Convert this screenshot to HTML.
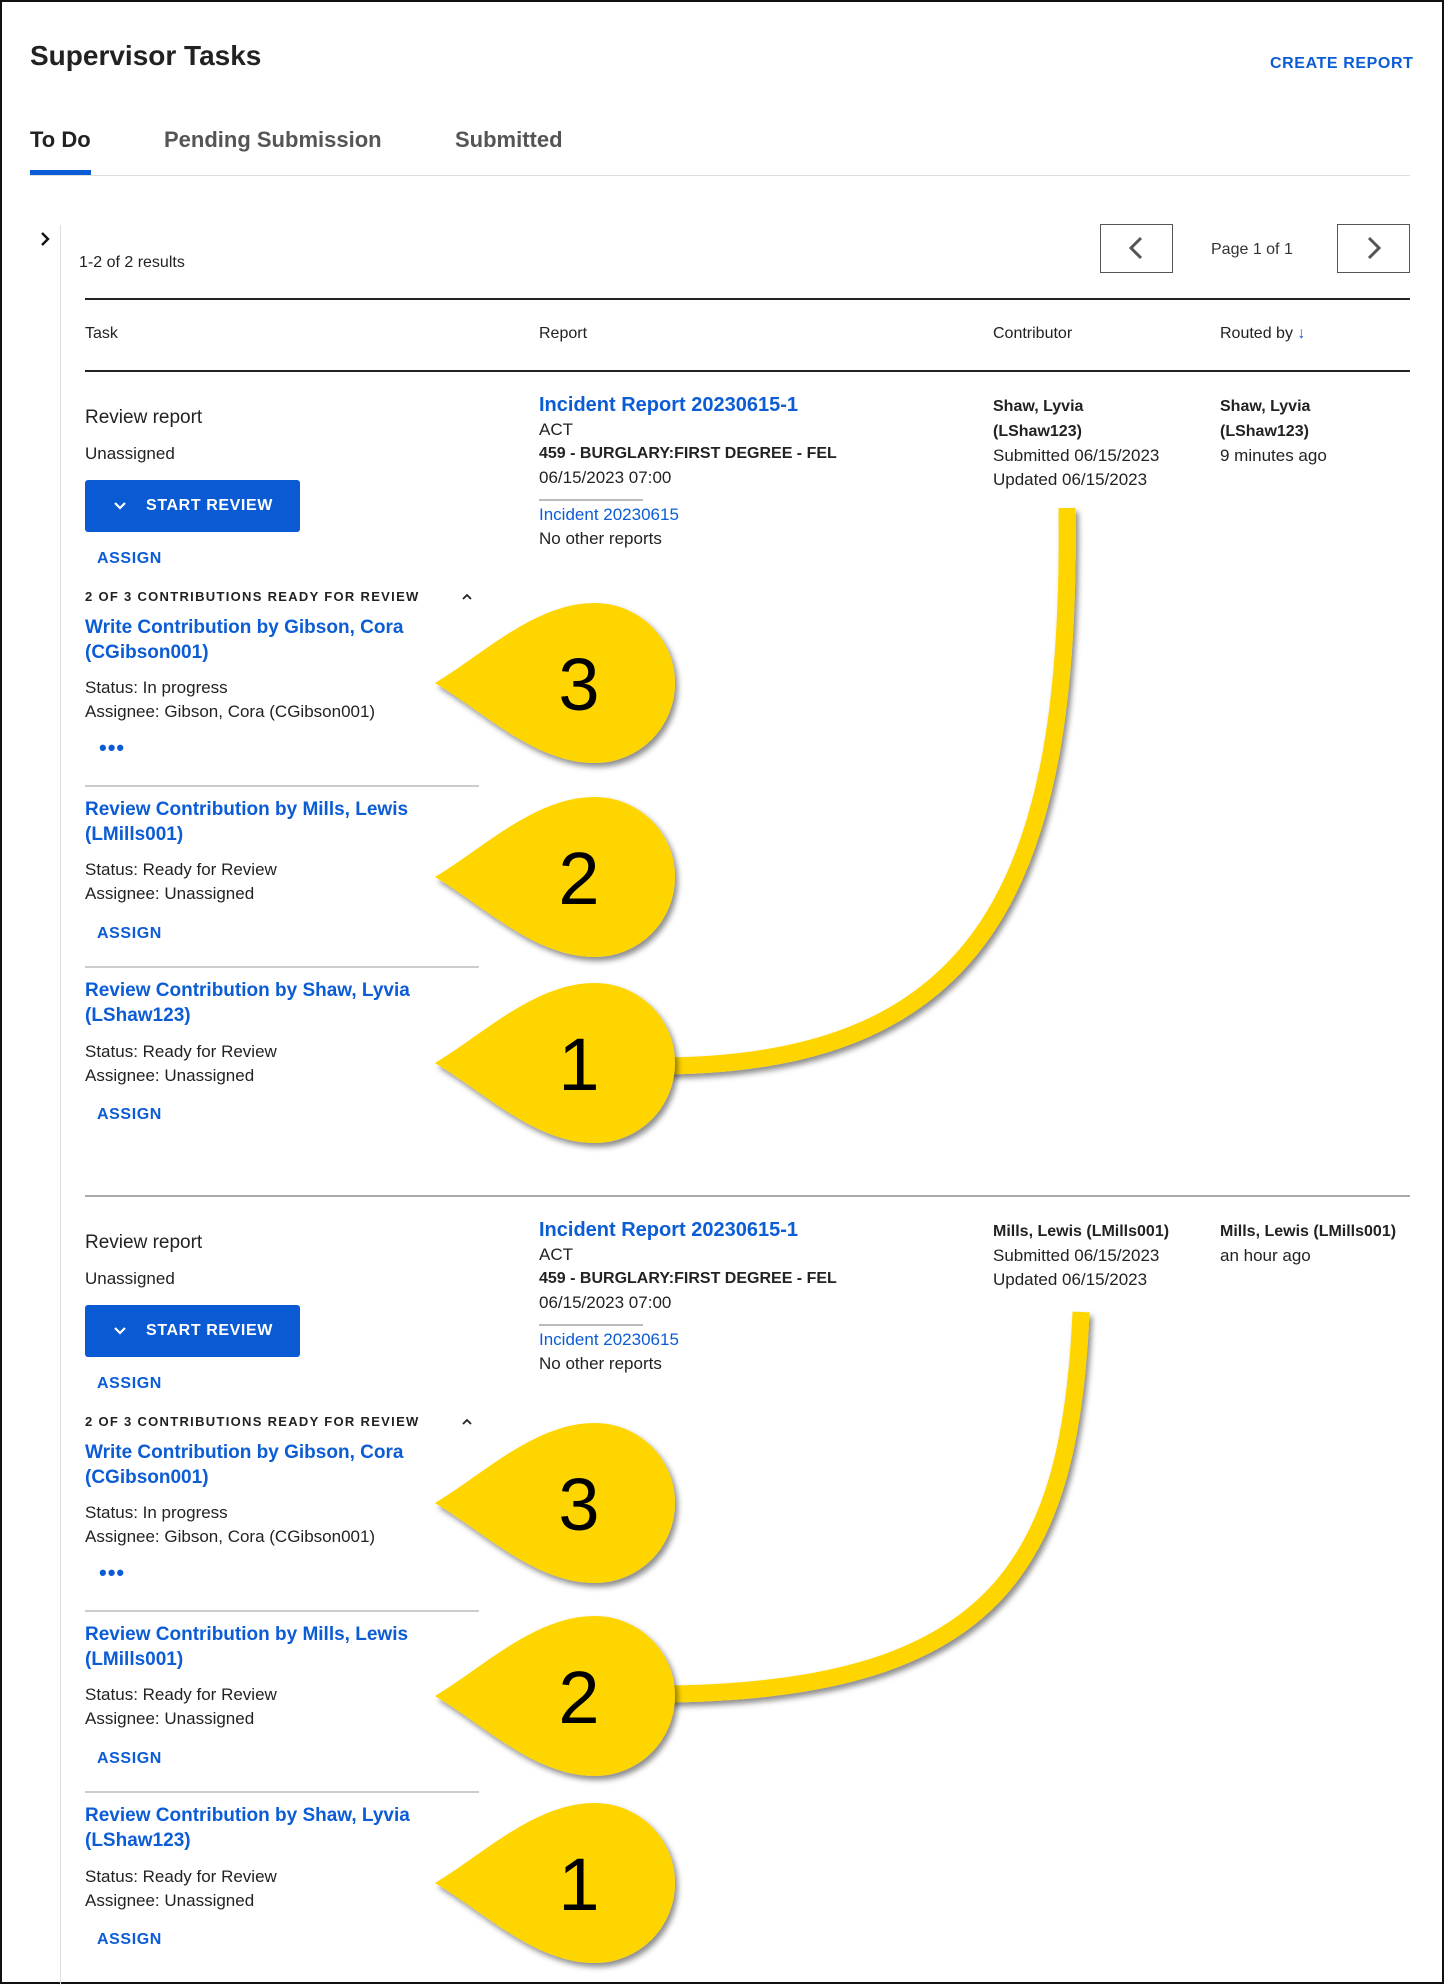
<!DOCTYPE html>
<html><head><meta charset="utf-8"><style>
*{margin:0;padding:0;box-sizing:border-box}
body{width:1444px;height:1984px;position:relative;background:#fff;font-family:"Liberation Sans",Arial,sans-serif;color:#222;overflow:hidden}
.frame{position:absolute;left:0;top:0;width:1444px;height:1984px;border:2px solid #111}
.t{position:absolute;white-space:nowrap;font-size:17px;line-height:24px}
.b{font-weight:bold}
.blue{color:#0b5cd5}
.lnk{color:#0b5cd5;font-size:19px;font-weight:bold;line-height:25px}
.cap{color:#0b5cd5;font-size:16px;font-weight:bold;letter-spacing:.6px}
.hl{position:absolute;background:#ccc;height:2px}
.btn{position:absolute;background:#0a5ad4;border-radius:3px;color:#fff;font-weight:bold;font-size:16px;letter-spacing:.6px;display:flex;align-items:center;justify-content:center;width:215px;height:52px;left:85px}
.pg{position:absolute;width:73px;height:49px;border:1.5px solid #555;top:224px}
.hd{font-size:16px;color:#222}
</style></head><body>
<div class="frame"></div>

<div class="t b" style="left:30px;top:38px;font-size:28px;line-height:36px;color:#222">Supervisor Tasks</div>
<div class="t cap" style="left:1270px;top:52px;font-size:16px">CREATE REPORT</div>

<div class="t b" style="left:30px;top:126px;font-size:22px;line-height:28px;color:#222">To Do</div>
<div class="t b" style="left:164px;top:126px;font-size:22px;line-height:28px;color:#555">Pending Submission</div>
<div class="t b" style="left:455px;top:126px;font-size:22px;line-height:28px;color:#555">Submitted</div>
<div style="position:absolute;left:30px;top:170px;width:61px;height:6px;background:#0b5cd5"></div>
<div style="position:absolute;left:30px;top:175px;width:1380px;height:1px;background:#ddd"></div>

<svg style="position:absolute;left:38px;top:231px" width="14" height="16" viewBox="0 0 14 16"><path d="M4 2l6 6-6 6" fill="none" stroke="#111" stroke-width="2.4"/></svg>
<div style="position:absolute;left:60px;top:225px;width:1px;height:1760px;background:#ddd"></div>

<div class="t" style="left:79px;top:251px;font-size:16px">1-2 of 2 results</div>
<div class="pg" style="left:1100px"><svg width="70" height="46" viewBox="0 0 70 46"><path d="M40 13l-10 10 10 10" fill="none" stroke="#555" stroke-width="3"/></svg></div>
<div class="t" style="left:1211px;top:238px;font-size:16px;color:#333">Page 1 of 1</div>
<div class="pg" style="left:1337px"><svg width="70" height="46" viewBox="0 0 70 46"><path d="M31 13l10 10-10 10" fill="none" stroke="#555" stroke-width="3"/></svg></div>

<div style="position:absolute;left:85px;top:298px;width:1325px;height:2px;background:#222"></div>
<div class="t hd" style="left:85px;top:322px">Task</div>
<div class="t hd" style="left:539px;top:322px">Report</div>
<div class="t hd" style="left:993px;top:322px">Contributor</div>
<div class="t hd" style="left:1220px;top:322px">Routed by <span class="blue">&#8595;</span></div>
<div style="position:absolute;left:85px;top:370px;width:1325px;height:2px;background:#222"></div>

<!-- ROW 1 -->
<div class="t" style="left:85px;top:406px;font-size:19px">Review report</div>
<div class="t" style="left:85px;top:442px">Unassigned</div>
<div class="btn" style="top:480px"><svg width="16" height="12" viewBox="0 0 16 12" style="margin-right:18px"><path d="M3 3l5 5 5-5" fill="none" stroke="#fff" stroke-width="2.2"/></svg>START REVIEW</div>
<div class="t cap" style="left:97px;top:547px">ASSIGN</div>
<div class="t b" style="left:85px;top:587px;font-size:13px;letter-spacing:1.3px;line-height:20px">2 OF 3 CONTRIBUTIONS READY FOR REVIEW</div>
<svg style="position:absolute;left:460px;top:592px" width="14" height="10" viewBox="0 0 14 10"><path d="M3 7l4-4 4 4" fill="none" stroke="#222" stroke-width="1.8"/></svg>
<div class="t lnk" style="left:85px;top:615px">Write Contribution by Gibson, Cora<br>(CGibson001)</div>
<div class="t" style="left:85px;top:676px">Status: In progress<br>Assignee: Gibson, Cora (CGibson001)</div>
<div class="t blue b" style="left:99px;top:736px;font-size:22px;letter-spacing:1px">&#8226;&#8226;&#8226;</div>
<div class="hl" style="left:85px;top:785px;width:394px"></div>
<div class="t lnk" style="left:85px;top:797px">Review Contribution by Mills, Lewis<br>(LMills001)</div>
<div class="t" style="left:85px;top:858px">Status: Ready for Review<br>Assignee: Unassigned</div>
<div class="t cap" style="left:97px;top:922px">ASSIGN</div>
<div class="hl" style="left:85px;top:966px;width:394px"></div>
<div class="t lnk" style="left:85px;top:978px">Review Contribution by Shaw, Lyvia<br>(LShaw123)</div>
<div class="t" style="left:85px;top:1040px">Status: Ready for Review<br>Assignee: Unassigned</div>
<div class="t cap" style="left:97px;top:1103px">ASSIGN</div>

<div class="t lnk" style="left:539px;top:393px;font-size:20px">Incident Report 20230615-1</div>
<div class="t" style="left:539px;top:418px">ACT</div>
<div class="t b" style="left:539px;top:442px;font-size:16px">459 - BURGLARY:FIRST DEGREE - FEL</div>
<div class="t" style="left:539px;top:466px">06/15/2023 07:00</div>
<div style="position:absolute;left:539px;top:499px;width:104px;height:2px;background:#bbb"></div>
<div class="t blue" style="left:539px;top:503px">Incident 20230615</div>
<div class="t" style="left:539px;top:527px">No other reports</div>

<div class="t" style="left:993px;top:394px"><b style="font-size:16px">Shaw, Lyvia<br>(LShaw123)</b><br>Submitted 06/15/2023<br>Updated 06/15/2023</div>
<div class="t" style="left:1220px;top:394px"><b style="font-size:16px">Shaw, Lyvia<br>(LShaw123)</b><br>9 minutes ago</div>

<div class="hl" style="left:85px;top:1195px;width:1325px;height:1.5px;background:#aaa"></div>

<!-- ROW 2 -->
<div class="t" style="left:85px;top:1231px;font-size:19px">Review report</div>
<div class="t" style="left:85px;top:1267px">Unassigned</div>
<div class="btn" style="top:1305px"><svg width="16" height="12" viewBox="0 0 16 12" style="margin-right:18px"><path d="M3 3l5 5 5-5" fill="none" stroke="#fff" stroke-width="2.2"/></svg>START REVIEW</div>
<div class="t cap" style="left:97px;top:1372px">ASSIGN</div>
<div class="t b" style="left:85px;top:1412px;font-size:13px;letter-spacing:1.3px;line-height:20px">2 OF 3 CONTRIBUTIONS READY FOR REVIEW</div>
<svg style="position:absolute;left:460px;top:1417px" width="14" height="10" viewBox="0 0 14 10"><path d="M3 7l4-4 4 4" fill="none" stroke="#222" stroke-width="1.8"/></svg>
<div class="t lnk" style="left:85px;top:1440px">Write Contribution by Gibson, Cora<br>(CGibson001)</div>
<div class="t" style="left:85px;top:1501px">Status: In progress<br>Assignee: Gibson, Cora (CGibson001)</div>
<div class="t blue b" style="left:99px;top:1561px;font-size:22px;letter-spacing:1px">&#8226;&#8226;&#8226;</div>
<div class="hl" style="left:85px;top:1610px;width:394px"></div>
<div class="t lnk" style="left:85px;top:1622px">Review Contribution by Mills, Lewis<br>(LMills001)</div>
<div class="t" style="left:85px;top:1683px">Status: Ready for Review<br>Assignee: Unassigned</div>
<div class="t cap" style="left:97px;top:1747px">ASSIGN</div>
<div class="hl" style="left:85px;top:1791px;width:394px"></div>
<div class="t lnk" style="left:85px;top:1803px">Review Contribution by Shaw, Lyvia<br>(LShaw123)</div>
<div class="t" style="left:85px;top:1865px">Status: Ready for Review<br>Assignee: Unassigned</div>
<div class="t cap" style="left:97px;top:1928px">ASSIGN</div>

<div class="t lnk" style="left:539px;top:1218px;font-size:20px">Incident Report 20230615-1</div>
<div class="t" style="left:539px;top:1243px">ACT</div>
<div class="t b" style="left:539px;top:1267px;font-size:16px">459 - BURGLARY:FIRST DEGREE - FEL</div>
<div class="t" style="left:539px;top:1291px">06/15/2023 07:00</div>
<div style="position:absolute;left:539px;top:1324px;width:104px;height:2px;background:#bbb"></div>
<div class="t blue" style="left:539px;top:1328px">Incident 20230615</div>
<div class="t" style="left:539px;top:1352px">No other reports</div>

<div class="t" style="left:993px;top:1219px"><b style="font-size:16px">Mills, Lewis (LMills001)</b><br>Submitted 06/15/2023<br>Updated 06/15/2023</div>
<div class="t" style="left:1220px;top:1219px"><b style="font-size:16px">Mills, Lewis (LMills001)</b><br>an hour ago</div>

<!-- callouts -->
<svg style="position:absolute;left:0;top:0" width="1444" height="1984" viewBox="0 0 1444 1984">
<defs><filter id="sh" x="-20%" y="-20%" width="140%" height="140%"><feDropShadow dx="3" dy="4" stdDeviation="3" flood-color="#000" flood-opacity="0.45"/></filter>
<symbol id="drop" overflow="visible"><path d="M-160 0 C-110 -30 -60 -80 0 -80 A80 80 0 0 1 0 80 C-60 80 -110 30 -160 0 Z" fill="#ffd500"/></symbol></defs>
<g filter="url(#sh)" fill="none" stroke="#ffd500" stroke-width="17">
<path d="M1067 508 C1072 880 985 1062 668 1066"/>
<path d="M1081 1312 C1070 1560 1000 1690 668 1694"/>
</g>
<g filter="url(#sh)">
<use href="#drop" x="595" y="683"/><use href="#drop" x="595" y="877"/><use href="#drop" x="595" y="1063"/>
<use href="#drop" x="595" y="1503"/><use href="#drop" x="595" y="1696"/><use href="#drop" x="595" y="1883"/>
</g>
<g font-family="Liberation Sans, Arial, sans-serif" font-size="74" fill="#000" text-anchor="middle">
<text x="579" y="710">3</text><text x="579" y="904">2</text><text x="579" y="1090">1</text>
<text x="579" y="1530">3</text><text x="579" y="1723">2</text><text x="579" y="1910">1</text>
</g>
</svg>
</body></html>
